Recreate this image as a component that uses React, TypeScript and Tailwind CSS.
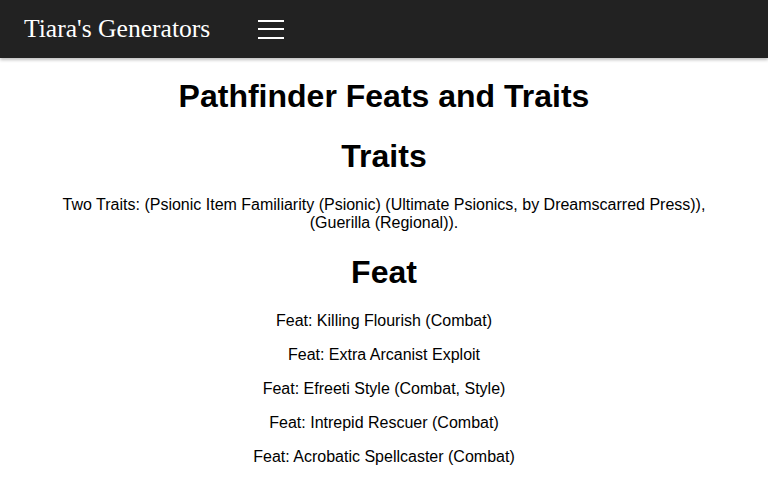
const feats = [
  "Feat: Killing Flourish (Combat)",
  "Feat: Extra Arcanist Exploit",
  "Feat: Efreeti Style (Combat, Style)",
  "Feat: Intrepid Rescuer (Combat)",
  "Feat: Acrobatic Spellcaster (Combat)",
];

const App = () => {
  return (
    <div className="min-h-screen bg-white font-['Liberation_Sans',Arial,sans-serif] text-black">
      {/* NAVBAR */}
      <nav className="h-[58px] bg-[#222222] flex items-center px-6 shadow-[0_2px_3px_rgba(0,0,0,0.25)]">
        <span className="text-white text-[25.6px] font-['Liberation_Serif','Times_New_Roman',serif] leading-none">
          Tiara's Generators
        </span>
        <button className="ml-12 w-[26px] flex flex-col gap-[6.5px] py-1">
          <span className="block h-[2px] bg-white" />
          <span className="block h-[2px] bg-white" />
          <span className="block h-[2px] bg-white" />
        </button>
      </nav>

      {/* CONTENT */}
      <main className="text-center px-6 pb-6 pt-[0.1px]">
        <h1 className="text-[32px] font-bold leading-[normal] mt-[19.5px] mb-[23.4px]">
          Pathfinder Feats and Traits
        </h1>
        <h2 className="text-[32px] font-bold leading-[normal] my-[21.44px]">Traits</h2>
        <p className="text-[16px] leading-[normal] my-4 px-8">
          Two Traits: (Psionic Item Familiarity (Psionic) (Ultimate Psionics, by Dreamscarred Press)), (Guerilla (Regional)).
        </p>
        <h2 className="text-[32px] font-bold leading-[normal] my-[21.44px]">Feat</h2>
        {feats.map((f) => (
          <p key={f} className="text-[16px] leading-[normal] my-4">
            {f}
          </p>
        ))}
      </main>
    </div>
  );
};

export default App;
